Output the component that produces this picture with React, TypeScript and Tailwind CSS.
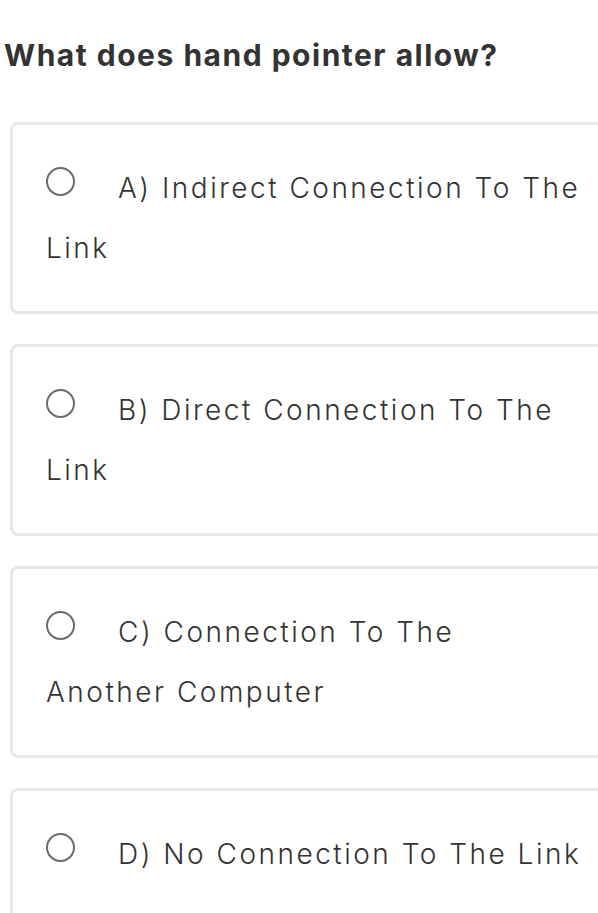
const OPTIONS = [
  "A) Indirect Connection To The Link",
  "B) Direct Connection To The Link",
  "C) Connection To The Another Computer",
  "D) No Connection To The Link",
];

export default function App() {
  return (
    <div className="w-[598px] h-[913px] overflow-hidden bg-white text-[#333333]" style={{ fontFamily: 'Inter, sans-serif' }}>
      <h1 className="pl-[4px] pt-[34px] text-[30px] font-bold leading-[42px] tracking-[1.5px]">
        What does hand pointer allow?
      </h1>
      <div className="mt-[46px] flex flex-col gap-[30px] pl-[10px]">
        {OPTIONS.map((opt) => (
          <label
            key={opt}
            className="block w-[660px] shrink-0 rounded-[8px] border-[3px] border-[#e3e8eb] pl-[33px] pr-[85px] py-[33px] text-[28px] font-light leading-[60px] tracking-[2.5px]"
          >
            <span className="mr-[43px] inline-block h-[29px] w-[29px] rounded-full border-2 border-[#6b6b6b] align-[2px]" />
            {opt}
          </label>
        ))}
      </div>
    </div>
  );
}
